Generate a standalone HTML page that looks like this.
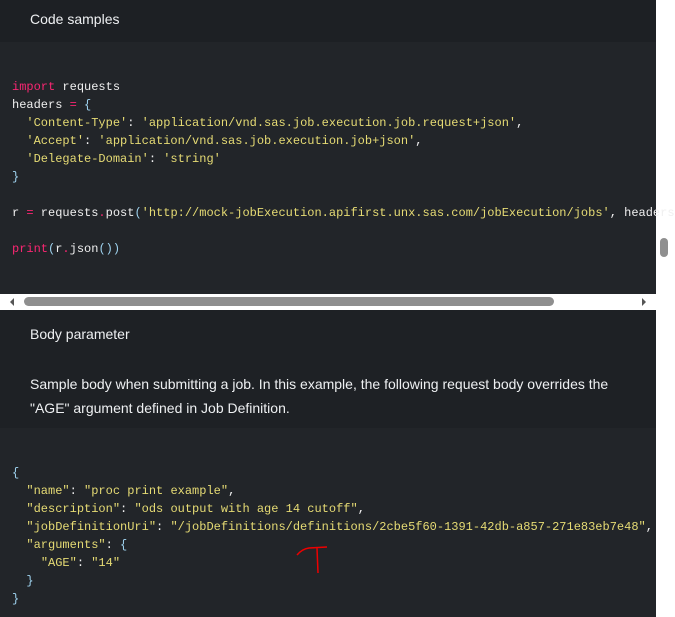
<!DOCTYPE html>
<html style="width:675px;height:617px;overflow:hidden"><head><meta charset="utf-8"><style>
*{margin:0;padding:0;box-sizing:border-box}
body{width:675px;height:617px;background:#fff;overflow:hidden;position:relative;font-family:"Liberation Sans",sans-serif}
.panel{position:absolute;left:0;top:0;width:656px;height:617px;background:#1e2125}
.h{position:absolute;left:0;width:656px;background:#1d2024}
.cb{position:absolute;left:0;width:656px;background:#222529}
.t{position:absolute;left:30px;color:#eef0f2;font-size:14px}
pre{position:absolute;left:12px;font-family:"Liberation Mono",monospace;font-size:12px;line-height:18px;color:#f0f0f0;white-space:pre}
.k{color:#f92672}.s{color:#e6db74}.p{color:#9fd3ef}
.sb{position:absolute;left:0;top:294px;width:656px;height:16px;background:#fff}
.vs{position:absolute;left:660px;top:238px;width:8px;height:19px;background:#8f8f8f;border-radius:4px}
</style></head><body>
<div class="panel"></div>
<div class="h" style="top:0;height:42px"></div>
<div class="t" style="top:11px">Code samples</div>
<div class="cb" style="top:42px;height:252px"></div>
<pre style="top:78px"><span class="k">import</span> requests
headers <span class="k">=</span> <span class="p">{</span>
  <span class="s">'Content-Type'</span>: <span class="s">'application/vnd.sas.job.execution.job.request+json'</span>,
  <span class="s">'Accept'</span>: <span class="s">'application/vnd.sas.job.execution.job+json'</span>,
  <span class="s">'Delegate-Domain'</span>: <span class="s">'string'</span>
<span class="p">}</span>

r <span class="k">=</span> requests<span class="k">.</span>post<span class="p">(</span><span class="s">'http://mock-jobExecution.apifirst.unx.sas.com/jobExecution/jobs'</span>, headers</pre>
<pre style="top:240px"><span class="k">print</span><span class="p">(</span>r<span class="k">.</span>json<span class="p">())</span></pre>
<div class="sb">
<svg width="656" height="16" style="position:absolute;left:0;top:0"><polygon points="14,4 10,8 14,12" fill="#555"/><polygon points="642,4 646,8 642,12" fill="#555"/><rect x="24" y="3" width="530" height="9" rx="4.5" fill="#8f8f8f"/></svg>
</div>
<div class="vs"></div>
<div class="t" style="top:326px">Body parameter</div>
<div class="t" style="top:372px;line-height:24px;width:610px">Sample body when submitting a job. In this example, the following request body overrides the "AGE" argument defined in Job Definition.</div>
<div class="cb" style="top:428px;height:189px"></div>
<pre style="top:464px"><span class="p">{</span>
  <span class="s">"name"</span>: <span class="s">"proc print example"</span>,
  <span class="s">"description"</span>: <span class="s">"ods output with age 14 cutoff"</span>,
  <span class="s">"jobDefinitionUri"</span>: <span class="s">"/jobDefinitions/definitions/2cbe5f60-1391-42db-a857-271e83eb7e48"</span>,
  <span class="s">"arguments"</span>: <span class="p">{</span>
    <span class="s">"AGE"</span>: <span class="s">"14"</span>
  <span class="p">}</span>
<span class="p">}</span></pre>
<svg width="675" height="617" style="position:absolute;left:0;top:0"><path d="M297,555 Q302,549 309,548 L327,547 M317,548 L318,573" stroke="#e00" stroke-width="1.5" fill="none"/></svg>
</body></html>
